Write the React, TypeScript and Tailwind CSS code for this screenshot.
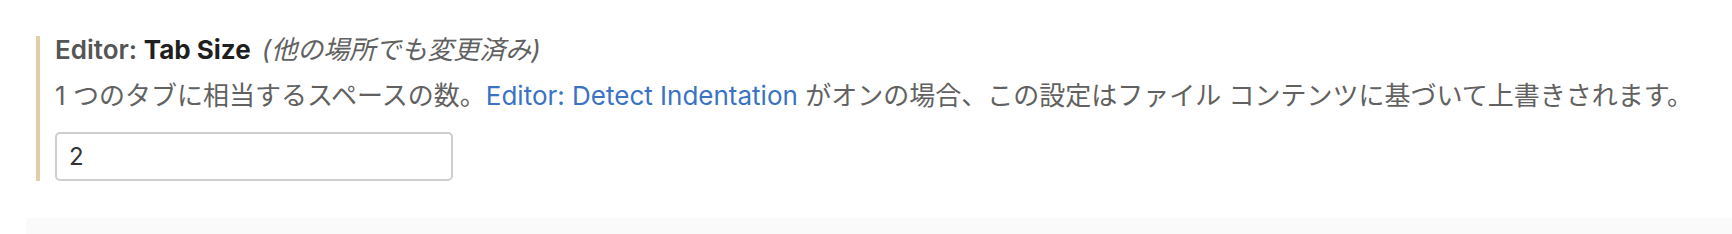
import React from 'react';

const font = { fontFamily: '"Inter", "Noto Sans CJK JP", sans-serif' };

const App: React.FC = () => {
  return (
    <div className="w-[1732px] h-[234px] bg-white overflow-hidden flex flex-col" style={font}>
      <div className="pt-[36px] pl-[36px]">
        <div className="border-l-4 border-[#e2cfa8] pl-[15px] flex flex-col">
          <div className="h-[28px] flex items-center text-[26px] leading-[28px] whitespace-pre">
            <span className="font-semibold text-[#555555]">Editor: </span>
            <span className="font-bold text-[#1f1f1f]">Tab Size</span>
            <span className="italic text-[#616161] ml-[11px]">(他の場所でも変更済み)</span>
          </div>
          <div className="mt-[18px] h-[28px] flex items-center text-[26px] leading-[28px] text-[#616161] whitespace-pre">
            <span>1 つのタブに相当するスペースの数。</span>
            <span className="text-[#3a73c4]">Editor: Detect Indentation</span>
            <span> がオンの場合、この設定はファイル コンテンツに基づいて上書きされます。</span>
          </div>
          <div className="mt-[22px]">
            <input
              readOnly
              value="2"
              className="w-[398px] h-[49px] border-2 border-[#cecece] rounded-[5px] px-[12px] text-[24px] text-[#333333] outline-none"
              style={font}
            />
          </div>
        </div>
      </div>
      <div className="mt-[37px] ml-[26px] h-[16px] bg-[#fafafa]" />
    </div>
  );
};

export default App;
